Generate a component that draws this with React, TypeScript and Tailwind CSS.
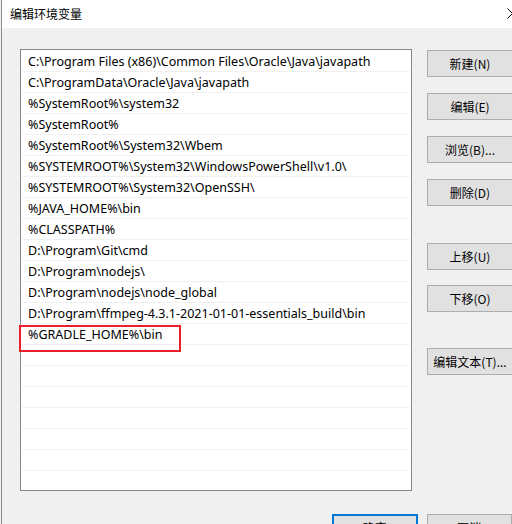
import React from "react";

const items = [
  "C:\\Program Files (x86)\\Common Files\\Oracle\\Java\\javapath",
  "C:\\ProgramData\\Oracle\\Java\\javapath",
  "%SystemRoot%\\system32",
  "%SystemRoot%",
  "%SystemRoot%\\System32\\Wbem",
  "%SYSTEMROOT%\\System32\\WindowsPowerShell\\v1.0\\",
  "%SYSTEMROOT%\\System32\\OpenSSH\\",
  "%JAVA_HOME%\\bin",
  "%CLASSPATH%",
  "D:\\Program\\Git\\cmd",
  "D:\\Program\\nodejs\\",
  "D:\\Program\\nodejs\\node_global",
  "D:\\Program\\ffmpeg-4.3.1-2021-01-01-essentials_build\\bin",
  "%GRADLE_HOME%\\bin",
];

const rows = [...items, ...Array(8).fill("")];

function Btn({ label, className = "" }: { label: string; className?: string }) {
  return (
    <div
      className={`w-[86px] h-[27px] flex items-center justify-center bg-[#e1e1e1] border border-[#adadad] text-[12px] text-black ${className}`}
    >
      {label}
    </div>
  );
}

export default function App() {
  return (
    <div
      className="w-[512px] h-[524px] overflow-hidden flex bg-[#f0f0f0] relative"
      style={{ fontFamily: '"Noto Sans", "Noto Sans CJK SC", sans-serif' }}
    >
      <div className="w-[1px] shrink-0 bg-[#f0f0f0]" />
      <div className="w-[1px] shrink-0 bg-[#8c8c8c]" />
      <div className="flex-1 flex flex-col min-w-0">
        <div className="h-[28px] shrink-0 bg-white flex items-center pl-[8px] relative">
          <span className="text-[12px] text-black leading-none" style={{ fontFamily: '"Noto Sans CJK SC", sans-serif' }}>
            编辑环境变量
          </span>
          <svg className="absolute left-[505px] top-[8px]" width="12" height="11" viewBox="0 0 12 11">
            <path d="M0.5 0.5 L10.5 10.5 M10.5 0.5 L0.5 10.5" stroke="#000" strokeWidth="1" fill="none" />
          </svg>
        </div>
        <div className="flex pl-[18px] pt-[21px]">
          <div className="relative w-[392px] h-[442px] shrink-0 border border-[#828790] bg-white pt-[1px] px-[1px]">
            <div className="h-full overflow-hidden">
              {rows.map((t, i) => (
                <div
                  key={i}
                  className="h-[21px] border-b border-[#f0f0f0] pl-[6px] pt-[2px] flex items-center text-[12.5px] text-black whitespace-nowrap leading-none"
                >
                  {t}
                </div>
              ))}
            </div>
            <div className="absolute left-[-2px] top-[275px] w-[162px] h-[27px] border-2 border-[#e8202a]" />
          </div>
          <div className="ml-[15px] pt-[1px] flex flex-col shrink-0" style={{ fontFamily: '"Noto Sans CJK SC", sans-serif' }}>
            <Btn label="新建(N)" />
            <Btn label="编辑(E)" className="mt-[16px]" />
            <Btn label="浏览(B)..." className="mt-[16px]" />
            <Btn label="删除(D)" className="mt-[16px]" />
            <Btn label="上移(U)" className="mt-[37px]" />
            <Btn label="下移(O)" className="mt-[15px]" />
            <Btn label="编辑文本(T)..." className="mt-[36px]" />
          </div>
        </div>
        <div className="flex pl-[330px] mt-[23px] shrink-0" style={{ fontFamily: '"Noto Sans CJK SC", sans-serif' }}>
          <div className="w-[86px] h-[28px] flex items-center justify-center bg-[#e1e1e1] border-2 border-[#0078d7] text-[12px] text-black">
            确定
          </div>
          <div className="ml-[9px] w-[86px] h-[28px] flex items-center justify-center bg-[#e1e1e1] border border-[#adadad] text-[12px] text-black">
            取消
          </div>
        </div>
      </div>
    </div>
  );
}
